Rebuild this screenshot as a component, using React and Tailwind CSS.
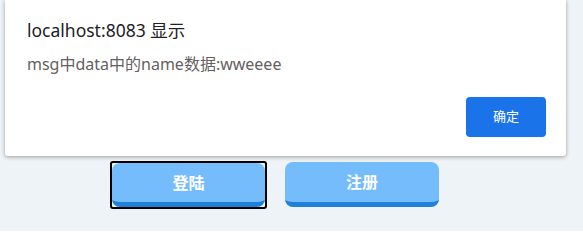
import React from 'react';

const font = { fontFamily: '"Noto Sans", "Noto Sans CJK SC", sans-serif' };

const App = () => {
  return (
    <div className="relative h-[231px] w-[583px] overflow-hidden bg-[#eef3f7]" style={font}>
      {/* page buttons */}
      <div className="flex items-start gap-[18px] pl-[110px] pt-[161px]">
        <div className="rounded-[3px] border-2 border-black">
          <button className="flex h-[44px] w-[153px] items-center justify-center rounded-[8px] border-b-[5px] border-[#1f80d9] bg-[#74bcfc] text-[16px] font-bold text-white">
            登陆
          </button>
        </div>
        <button className="mt-[1px] flex h-[45px] w-[154px] items-center justify-center rounded-[8px] border-b-[5px] border-[#1f80d9] bg-[#74bcfc] text-[16px] font-bold text-white">
          注册
        </button>
      </div>

      {/* alert dialog */}
      <div className="absolute left-[5px] top-0 h-[156px] w-[561px] rounded-b-[3px] bg-white shadow-[0_1px_4px_rgba(0,0,0,0.35)]">
        <div className="pl-[22px] pt-[19px]">
          <div className="text-[17.5px] leading-[22px] text-[#202124]">localhost:8083 显示</div>
          <div className="mt-[13px] text-[16px] leading-5 text-[#66605f]">msg中data中的name数据:wweeee</div>
        </div>
        <div className="absolute left-[461px] top-[97px]">
          <button className="flex h-[40px] w-[80px] items-center justify-center rounded-[4px] bg-[#1a73e8] text-[13px] text-white">
            确定
          </button>
        </div>
      </div>
    </div>
  );
};

export default App;
